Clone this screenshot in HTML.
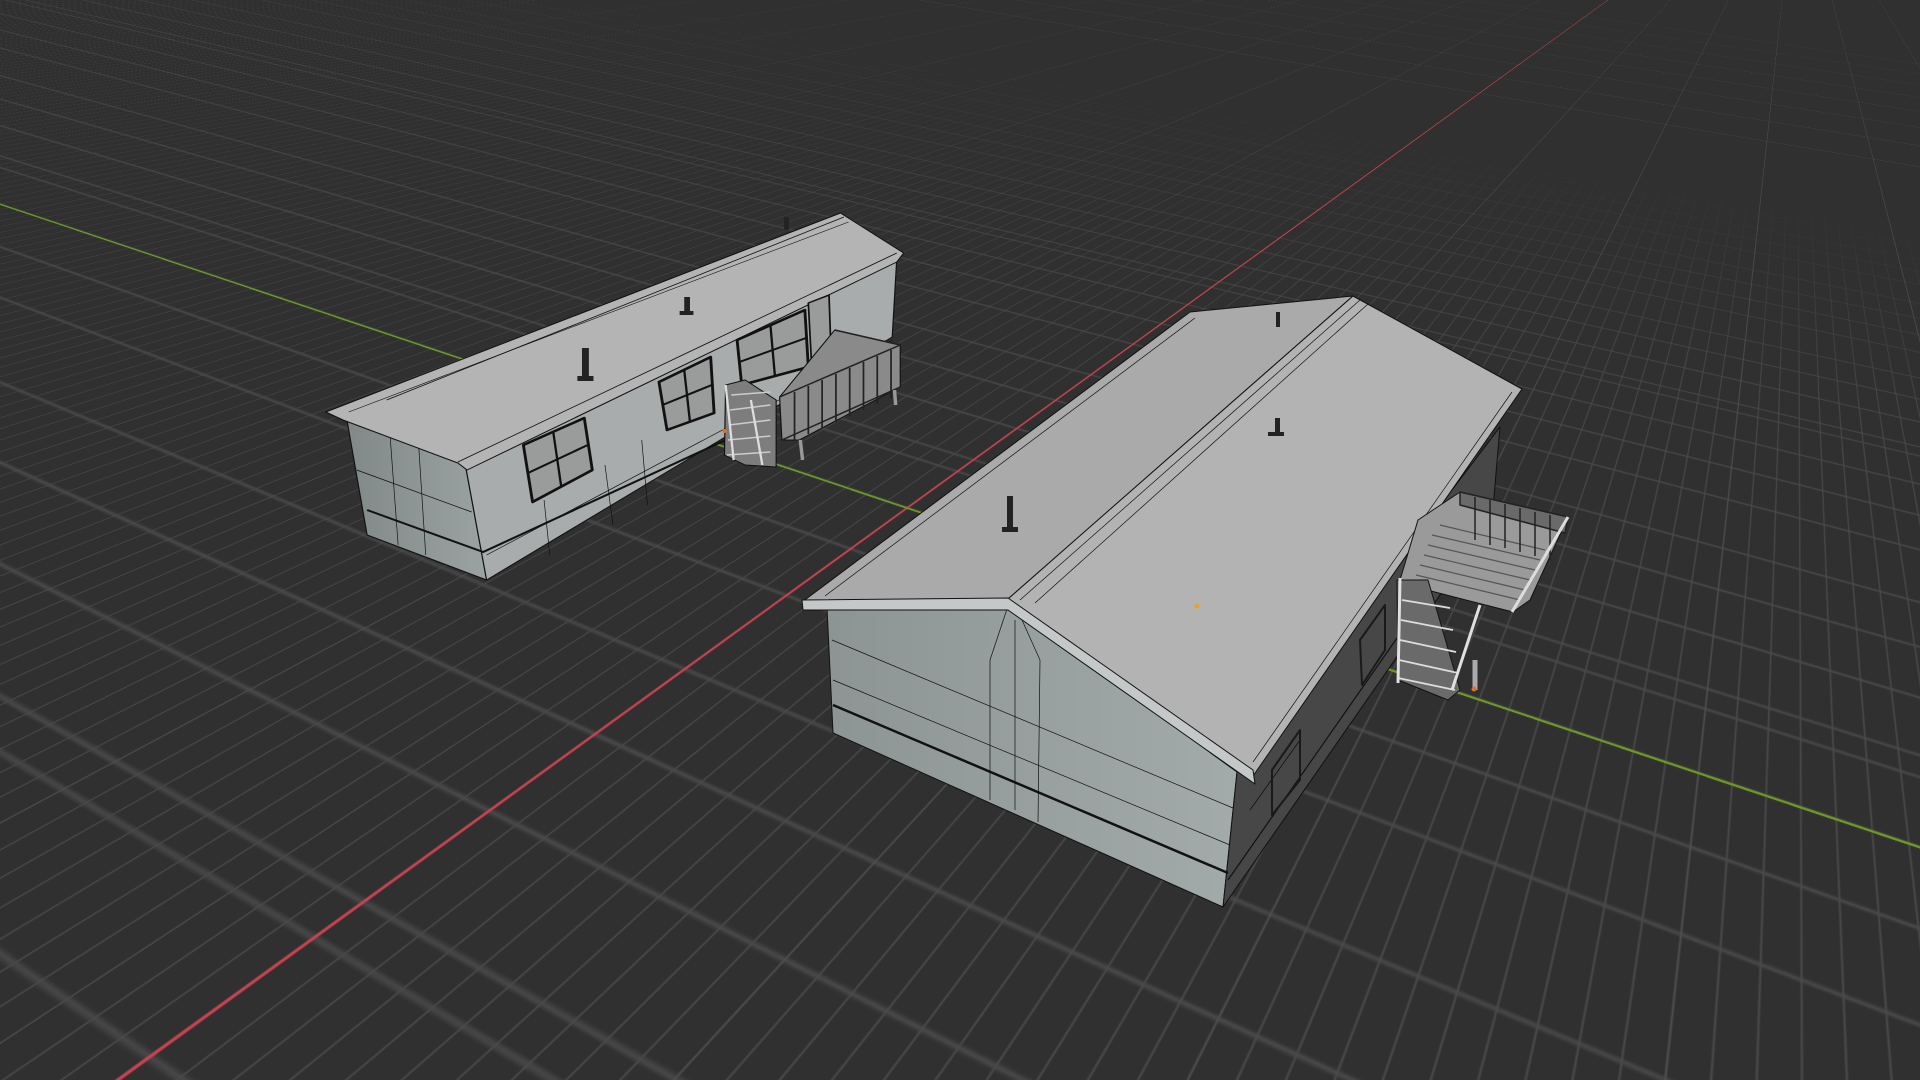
<!DOCTYPE html>
<html><head><meta charset="utf-8"><style>
html,body{margin:0;padding:0;background:#303030;overflow:hidden;width:1920px;height:1080px}
#vp{position:fixed;left:0;top:0;width:1920px;height:1080px;overflow:hidden;background:#303030;contain:strict;clip-path:inset(0)}
#plane{position:absolute;left:0;top:0;width:3820px;height:5810px;transform-origin:0 0;
transform:matrix3d(0.52776,0.12599,0,-0.00024874, 1.29560,-0.09877,0,0.00072098, 0,0,1,0, -1379.0,89.06,0,1);}
#minor,#major{position:absolute;left:0;top:0;width:3820px;height:5810px}
#minor{background-image:repeating-linear-gradient(90deg,#494949 0 0.8px,transparent 0.8px 20px),repeating-linear-gradient(180deg,#494949 0 0.8px,transparent 0.8px 20px);
background-position:0 0,0 10px;
-webkit-mask-image:linear-gradient(to bottom,#000 0,#000 1100px,transparent 1900px);mask-image:linear-gradient(to bottom,#000 0,#000 1100px,transparent 1900px)}
#major{background-image:repeating-linear-gradient(90deg,#4e4e4e 0 0.8px,transparent 0.8px 200px),repeating-linear-gradient(180deg,#4e4e4e 0 0.8px,transparent 0.8px 200px);
background-position:0 0,0 110px}
#red{position:absolute;left:2599px;top:0;width:2.2px;height:5810px;background:#c8434f}
#green{position:absolute;left:0;top:509px;width:3820px;height:2.2px;background:#6c9a22}
svg{position:absolute;left:0;top:0;display:block}
</style></head><body>
<div id="vp">
<div id="plane"><div id="minor"></div><div id="major"></div><div id="red"></div><div id="green"></div></div>
<svg width="1920" height="1080" viewBox="0 0 1920 1080" xmlns="http://www.w3.org/2000/svg">
<defs>
<linearGradient id="gw" x1="0" y1="0" x2="1" y2="0"><stop offset="0" stop-color="#8c9494"/><stop offset="1" stop-color="#a2aaaa"/></linearGradient>
<linearGradient id="gw1" x1="0" y1="0" x2="1" y2="0"><stop offset="0" stop-color="#808888"/><stop offset="1" stop-color="#9aa2a2"/></linearGradient>
</defs>
<g transform="translate(320,0) scale(1.149,1) translate(-320,0)">
<g stroke="#111" stroke-width="1" stroke-linejoin="round">
<polygon points="343,417 377,403 447,468 465,580 361,535" fill="url(#gw1)"/>
<polygon points="447,468 822,258 818,337 465,580" fill="#a9acac"/>
<polyline points="361,510 462,552 673,440" fill="none" stroke-width="2"/>
<line x1="352" y1="470" x2="452" y2="512" stroke-width="0.7"/>
<line x1="465" y1="555" x2="818" y2="340" stroke-width="0.7"/>
<line x1="515" y1="500" x2="520" y2="555" stroke-width="0.6"/>
<line x1="568" y1="465" x2="575" y2="525" stroke-width="0.6"/>
<line x1="600" y1="440" x2="605" y2="505" stroke-width="0.6"/>
<line x1="380" y1="420" x2="388" y2="545" stroke-width="0.6"/>
<line x1="405" y1="430" x2="412" y2="555" stroke-width="0.6"/>
<polygon points="325,412 773,213 828,253 822,262 448,470 440,463 340,420" fill="#b4b4b4"/>
<line x1="378" y1="400" x2="776" y2="217" stroke-width="0.8"/>
<line x1="440" y1="462" x2="822" y2="253" stroke-width="0.8"/>
<line x1="345" y1="412" x2="780" y2="222" stroke-width="0.6"/>
<g fill="#9a9c9c" stroke="#111" stroke-width="2.5">
<polygon points="497,445 550,418 557,470 505,502"/>
<polygon points="615,382 660,357 663,413 622,430"/>
<polygon points="683,340 742,310 745,367 687,385"/>
<polygon points="745,303 763,295 765,360 748,368" stroke-width="1.5"/>
</g>
<g stroke="#111" stroke-width="2">
<line x1="523" y1="432" x2="530" y2="487"/><line x1="501" y1="473" x2="553" y2="445"/>
<line x1="637" y1="370" x2="642" y2="422"/><line x1="618" y1="405" x2="661" y2="385"/>
<line x1="712" y1="325" x2="716" y2="377"/><line x1="685" y1="362" x2="743" y2="338"/>
</g>
<g fill="#222" stroke="none"><rect x="548" y="348" width="6" height="30"/><rect x="544" y="376" width="14" height="5"/>
<rect x="637" y="297" width="5" height="16"/><rect x="633" y="311" width="12" height="4"/>
<rect x="724" y="217" width="4" height="13"/></g>
<polygon points="720,397 768,330 825,345 825,387 737,440 722,440" fill="#8a8a8a"/>
<g stroke="#222" stroke-width="1.5">
<line x1="768" y1="330" x2="825" y2="345"/><line x1="720" y1="397" x2="825" y2="345"/>
<line x1="722" y1="440" x2="825" y2="387"/>
<line x1="733" y1="392" x2="733" y2="440"/><line x1="745" y1="386" x2="745" y2="434"/><line x1="757" y1="380" x2="757" y2="428"/><line x1="769" y1="374" x2="769" y2="422"/><line x1="781" y1="368" x2="781" y2="416"/><line x1="793" y1="362" x2="793" y2="410"/><line x1="805" y1="356" x2="805" y2="404"/><line x1="817" y1="350" x2="817" y2="398"/>
<line x1="738" y1="440" x2="740" y2="460" stroke="#999" stroke-width="3"/>
<line x1="820" y1="390" x2="821" y2="405" stroke="#999" stroke-width="3"/>
</g>
<polygon points="673,385 690,380 717,400 717,467 690,465 672,455" fill="#7d7d7d"/>
<g stroke="#ccc" stroke-width="1.5"><line x1="678" y1="395" x2="712" y2="392"/><line x1="677" y1="410" x2="712" y2="405"/><line x1="676" y1="425" x2="712" y2="420"/><line x1="675" y1="440" x2="712" y2="436"/><line x1="674" y1="455" x2="712" y2="452"/></g>
<line x1="673" y1="385" x2="680" y2="460" stroke="#ddd" stroke-width="2"/>
<line x1="695" y1="400" x2="705" y2="465" stroke="#ddd" stroke-width="2"/>
<circle cx="672" cy="431" r="2" fill="#e07030" stroke="none"/>
</g>
</g>
<g stroke="#111" stroke-width="1" stroke-linejoin="round">
<polygon points="827,608 1008,606 1237,772 1223,907 833,733" fill="url(#gw)"/>
<polygon points="1237,772 1500,427 1492,520 1223,907" fill="#474747"/>
<line x1="1228" y1="880" x2="1490" y2="505" stroke-width="1.2"/>
<line x1="1250" y1="810" x2="1300" y2="740" stroke-width="0.8"/>
<line x1="833" y1="705" x2="1228" y2="873" stroke-width="2.5"/>
<line x1="833" y1="680" x2="1230" y2="845" stroke-width="0.7"/>
<line x1="832" y1="640" x2="1233" y2="808" stroke-width="0.7"/>
<line x1="990" y1="660" x2="990" y2="800" stroke-width="0.7"/>
<line x1="1015" y1="620" x2="1015" y2="810" stroke-width="0.7"/>
<line x1="1040" y1="660" x2="1038" y2="822" stroke-width="0.7"/>
<line x1="990" y1="660" x2="1008" y2="606" stroke-width="0.7"/>
<line x1="1040" y1="660" x2="1022" y2="620" stroke-width="0.7"/>
<polygon points="802,602 1190,312 1353,296 1008,599" fill="#aaaaaa"/>
<polygon points="1008,599 1353,296 1522,389 1253,776" fill="#b3b3b3"/>
<polygon points="802,600 1008,598 1253,770 1255,784 1008,610 803,610" fill="#c4c8c8"/>
<line x1="825" y1="596" x2="1195" y2="318" stroke-width="0.7"/>
<line x1="1020" y1="600" x2="1360" y2="300" stroke-width="0.7"/>
<line x1="1035" y1="603" x2="1368" y2="304" stroke-width="0.7"/>
<line x1="1253" y1="762" x2="1512" y2="392" stroke-width="0.7"/>
<g fill="none" stroke="#1a1a1a" stroke-width="2">
<polygon points="1272,770 1300,730 1300,780 1272,815"/>
<polygon points="1360,640 1385,605 1385,650 1362,685"/>
<polygon points="1410,570 1440,530 1440,575 1412,610"/>
</g>
<g fill="#222" stroke="none"><rect x="1007" y="496" width="6" height="33"/><rect x="1002" y="527" width="16" height="5"/>
<rect x="1275" y="418" width="5" height="17"/><rect x="1268" y="432" width="16" height="4"/>
<rect x="1276" y="312" width="4" height="15"/></g>
<circle cx="1197" cy="606" r="2.5" fill="#e8a030" stroke="none"/>
<polygon points="1460,492 1568,517 1530,600 1513,612 1427,590 1400,580 1418,520" fill="#9a9a9a"/>
<g stroke="#555" stroke-width="1.2">
<line x1="1432" y1="535" x2="1540" y2="560"/><line x1="1428" y1="545" x2="1535" y2="570"/><line x1="1424" y1="555" x2="1530" y2="580"/><line x1="1420" y1="565" x2="1525" y2="590"/><line x1="1416" y1="575" x2="1520" y2="600"/><line x1="1440" y1="525" x2="1545" y2="550"/>
</g>
<g stroke="#222" stroke-width="1.5">
<polygon points="1460,492 1568,517 1565,533 1460,505" fill="#6a6a6a"/>
<line x1="1475" y1="497" x2="1475" y2="540"/><line x1="1490" y1="500" x2="1490" y2="545"/><line x1="1505" y1="504" x2="1505" y2="548"/><line x1="1520" y1="508" x2="1520" y2="552"/><line x1="1535" y1="512" x2="1535" y2="556"/><line x1="1550" y1="515" x2="1550" y2="560"/>
<line x1="1568" y1="517" x2="1512" y2="612" stroke="#ddd" stroke-width="3"/>
</g>
<polygon points="1397,580 1428,580 1460,690 1448,700 1398,680" fill="#6a6a6a"/>
<g stroke="#ddd" stroke-width="1.8"><line x1="1402" y1="600" x2="1450" y2="608"/><line x1="1401" y1="620" x2="1453" y2="630"/><line x1="1400" y1="640" x2="1456" y2="652"/><line x1="1399" y1="660" x2="1458" y2="673"/><line x1="1398" y1="678" x2="1455" y2="690"/></g>
<line x1="1400" y1="578" x2="1398" y2="683" stroke="#e0e0e0" stroke-width="3"/>
<line x1="1480" y1="605" x2="1452" y2="690" stroke="#e0e0e0" stroke-width="3"/>
<line x1="1475" y1="660" x2="1475" y2="690" stroke="#aaa" stroke-width="5"/>
<circle cx="1474" cy="689" r="2.5" fill="#e07030" stroke="none"/>
</g>
</svg>
</div>
</body></html>
